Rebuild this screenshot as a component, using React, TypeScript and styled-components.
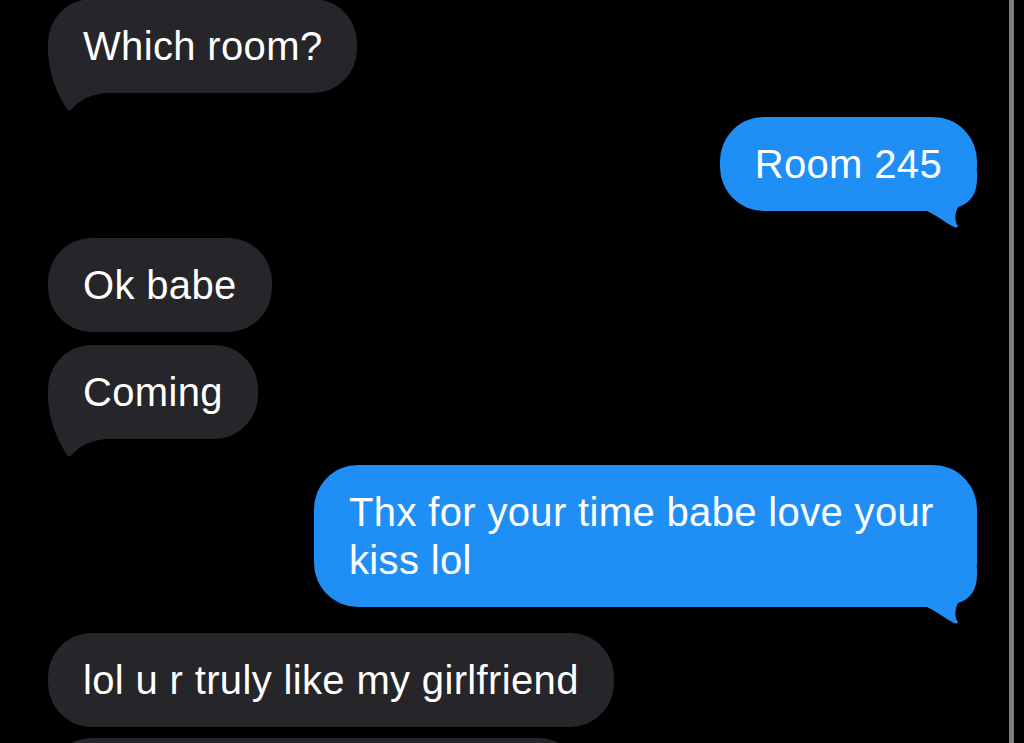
import React from "react";
import styled, { createGlobalStyle } from "styled-components";

const GlobalStyle = createGlobalStyle`
  html, body {
    margin: 0;
    padding: 0;
    background: #000;
    overflow: hidden;
  }
  * { box-sizing: border-box; }
`;

const GRAY = "#262529";
const BLUE = "#1f8ff6";

type Side = "in" | "out";

const Screen = styled.div`
  display: flex;
  width: 1024px;
  height: 743px;
  background: #000;
  overflow: hidden;
`;

const Thread = styled.div`
  flex: 0 0 1009px;
  display: flex;
  flex-direction: column;
  padding: 0 32px 0 48px;
`;

const Divider = styled.div`
  flex: 0 0 5px;
  background: #7c7c7c;
`;

const Row = styled.div<{ $side: Side; $gap: number }>`
  display: flex;
  justify-content: ${(p) => (p.$side === "out" ? "flex-end" : "flex-start")};
  margin-top: ${(p) => p.$gap}px;
  flex-shrink: 0;
`;

const Bubble = styled.div<{ $side: Side }>`
  position: relative;
  max-width: 663px;
  padding: 23px 35px;
  border-radius: 44px;
  background: ${(p) => (p.$side === "out" ? BLUE : GRAY)};
  color: #fff;
  font-family: "Liberation Sans", Arial, sans-serif;
  font-size: 40px;
  line-height: 48px;
  letter-spacing: 0.35px;
`;

/* the next received bubble, only its top edge shows at the bottom of the screen */
const PeekBubble = styled.div`
  width: 534px;
  height: 94px;
  border-radius: 44px;
  background: ${GRAY};
`;

const Text = styled.span`
  position: relative;
  z-index: 1;
`;

const TailSvg = styled.svg<{ $side: Side }>`
  position: absolute;
  display: block;
  ${(p) =>
    p.$side === "out"
      ? `right: 0; top: calc(100% - 40px); width: 50px; height: 58px;`
      : `left: 0; top: calc(100% - 47px); width: 60px; height: 66px;`}
`;

const Tail: React.FC<{ side: Side }> = ({ side }) =>
  side === "out" ? (
    <TailSvg $side="out" viewBox="0 0 50 58" aria-hidden>
      <path
        d="M50 0 L50 8 C50 22 44 32 31 36 C28 42 27 50 31 55 Q30 57.5 27 56 C19 52 9 44 0 40 L0 0 Z"
        fill={BLUE}
      />
    </TailSvg>
  ) : (
    <TailSvg $side="in" viewBox="0 0 60 66" aria-hidden>
      <path
        d="M0 0 C0 30 10 48 19 63 Q21 66 24 63 C29 57 38 49 58 47 L60 0 Z"
        fill={GRAY}
      />
    </TailSvg>
  );

type Msg = { side: Side; text: string; gap: number; tail?: boolean };

const messages: Msg[] = [
  { side: "in", text: "Which room?", gap: -1, tail: true },
  { side: "out", text: "Room 245", gap: 24, tail: true },
  { side: "in", text: "Ok babe", gap: 27 },
  { side: "in", text: "Coming", gap: 13, tail: true },
  { side: "out", text: "Thx for your time babe love your kiss lol", gap: 26, tail: true },
  { side: "in", text: "lol u r truly like my girlfriend", gap: 26 },
];

export default function App() {
  return (
    <>
      <GlobalStyle />
      <Screen>
        <Thread>
          {messages.map((m, i) => (
            <Row key={i} $side={m.side} $gap={m.gap}>
              <Bubble $side={m.side}>
                {m.tail && <Tail side={m.side} />}
                <Text>{m.text}</Text>
              </Bubble>
            </Row>
          ))}
          <Row $side="in" $gap={11}>
            <PeekBubble />
          </Row>
        </Thread>
        <Divider />
      </Screen>
    </>
  );
}
